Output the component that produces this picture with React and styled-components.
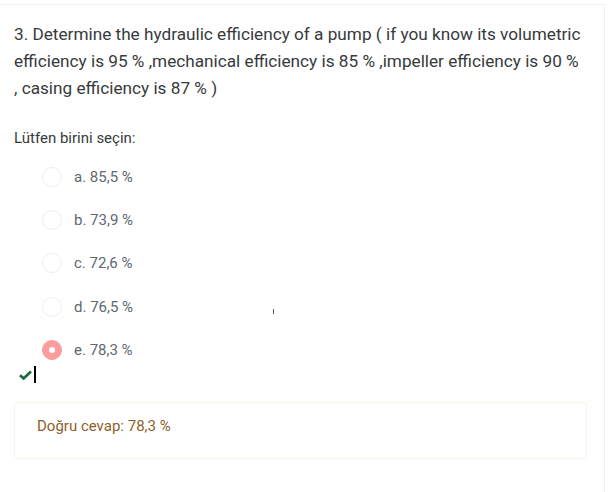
import React from "react";
import styled, { createGlobalStyle } from "styled-components";

const Global = createGlobalStyle`
  html, body { margin: 0; padding: 0; background: #fff; }
  body { font-family: Roboto, "Noto Sans", sans-serif; }
`;

const Card = styled.div`
  position: relative;
  margin-top: 4px;
  width: 605px;
  height: 488px;
  box-sizing: border-box;
  border-top: 1px solid #f0f0f0;
  border-right: 1px solid #f0f0f0;
  padding: 16px 0 0 14px;
`;

const Question = styled.div`
  font-size: 17.2px;
  line-height: 27px;
  color: #373a3c;
  width: 570px;
`;

const Prompt = styled.div`
  margin-top: 27px;
  font-size: 15px;
  color: #373a3c;
`;

const Options = styled.div`
  margin-top: 20px;
  padding-left: 28px;
  display: flex;
  flex-direction: column;
  gap: 23.2px;
`;

const Option = styled.div`
  display: flex;
  align-items: center;
  gap: 12px;
  height: 20px;
  font-size: 15px;
  color: #5f6770;
`;

const Radio = styled.span`
  width: 20px;
  height: 20px;
  border-radius: 50%;
  box-sizing: border-box;
  flex: none;
  background: ${(p) => (p.$checked ? "#fc9c9c" : "#fff")};
  border: 1px solid ${(p) => (p.$checked ? "#fc9c9c" : "#eeeeee")};
  display: flex;
  align-items: center;
  justify-content: center;
  &::after {
    content: "";
    display: ${(p) => (p.$checked ? "block" : "none")};
    width: 6px;
    height: 6px;
    border-radius: 50%;
    background: #fff;
  }
`;

const Mark = styled.div`
  margin-top: 6px;
  padding-left: 5px;
  display: flex;
  align-items: center;
  height: 18px;
`;

const Caret = styled.span`
  width: 1.5px;
  height: 17px;
  background: #000;
  margin-left: 2px;
`;

const Feedback = styled.div`
  margin-top: 18px;
  width: 573px;
  height: 57px;
  box-sizing: border-box;
  border: 1px solid #fdf2e6;
  border-radius: 4px;
  padding: 14px 0 0 22px;
  font-size: 15px;
  color: #8e5f2c;
`;

const Tick = styled.span`
  position: absolute;
  left: 273px;
  top: 304px;
  width: 1px;
  height: 5px;
  background: #4a5a6a;
`;

const opts = ["a. 85,5 %", "b. 73,9 %", "c. 72,6 %", "d. 76,5 %", "e. 78,3 %"];

export default function App() {
  return (
    <>
      <Global />
      <Card>
        <Question>
          3. Determine the hydraulic efficiency of a pump ( if you know its volumetric
          efficiency is 95 % ,mechanical efficiency is 85 % ,impeller efficiency is 90 %
          , casing efficiency is 87 % )
        </Question>
        <Prompt>Lütfen birini seçin:</Prompt>
        <Options>
          {opts.map((o, i) => (
            <Option key={o}>
              <Radio $checked={i === 4} />
              <span>{o}</span>
            </Option>
          ))}
        </Options>
        <Mark>
          <svg width="13" height="10" viewBox="0 0 13 10">
            <path d="M1 5.2 L4.6 8.4 L12 1.4" fill="none" stroke="#1e6b45" strokeWidth="2.8" strokeLinejoin="miter" />
          </svg>
          <Caret />
        </Mark>
        <Feedback>Doğru cevap: 78,3 %</Feedback>
        <Tick />
      </Card>
    </>
  );
}
